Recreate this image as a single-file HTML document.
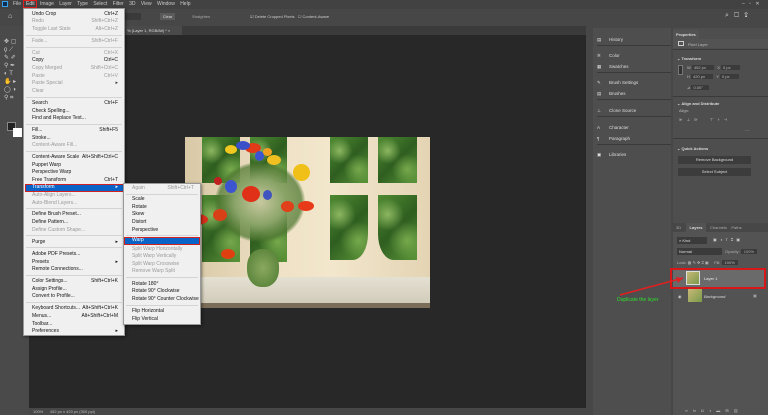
<!DOCTYPE html><html><head><style>
*{margin:0;padding:0;box-sizing:border-box}
body{width:768px;height:415px;overflow:hidden;background:#535353;font-family:"Liberation Sans",sans-serif;position:relative;font-size:5px;color:#ddd}
.a{position:absolute}
.menu{background:#f0f0f0;border:1px solid #999;color:#111;box-shadow:1px 1px 3px rgba(0,0,0,.5)}
.mi{position:absolute;left:8px;right:4px;height:7px;line-height:7px;font-size:5px;white-space:nowrap}
.mi span{position:absolute;right:2px}
.d{color:#9a9a9a}
.sep{position:absolute;left:2px;right:2px;height:1px;background:#d4d4d4}
.pl{position:absolute;left:8px;font-size:4.5px;color:#ddd}
.f{position:absolute;border-radius:50%}
.pane{position:absolute;background:radial-gradient(circle at 25% 30%,rgba(160,200,110,.8) 0,transparent 30%),radial-gradient(circle at 75% 70%,rgba(140,190,90,.7) 0,transparent 35%),linear-gradient(135deg,#4e8a32,#2f5e20 50%,#5a9438)}
</style></head><body>
<div class="a" style="left:0;top:0;width:768px;height:9px;background:#424242"></div>
<div class="a" style="left:2px;top:1px;width:6px;height:6px;background:#0f2f50;border:1px solid #3aa0f0"></div>
<div class="a" style="left:13px;top:1px;font-size:5px;color:#ccc">File</div>
<div class="a" style="left:23px;top:0;width:14px;height:8px;border:1px solid #e02020"></div>
<div class="a" style="left:26px;top:1px;font-size:5px;color:#ddd">Edit</div>
<div class="a" style="left:40px;top:1px;font-size:5px;color:#ccc;word-spacing:4px">Image Layer Type Select Filter 3D View Window Help</div>
<div class="a" style="left:742px;top:1px;font-size:5px;color:#ccc;word-spacing:3px">– ▫ ✕</div>
<div class="a" style="left:0;top:9px;width:768px;height:17px;background:#474747"></div>
<div class="a" style="left:8px;top:13px;font-size:7px;color:#ddd">⌂</div>
<div class="a" style="left:105px;top:13px;width:36px;height:7px;background:#3a3a3a"></div>
<div class="a" style="left:160px;top:13px;width:15px;height:7px;background:#5a5a5a;font-size:4px;line-height:7px;text-align:center">Clear</div>
<div class="a" style="left:192px;top:14px;font-size:4px;color:#aaa">Straighten</div>
<div class="a" style="left:250px;top:14px;font-size:4px;color:#ccc">☑ Delete Cropped Pixels &nbsp; ☐ Content-Aware</div>
<div class="a" style="left:725px;top:12px;font-size:7px;color:#ccc;word-spacing:3px">⌕ ▢ ⇪</div>
<div class="a" style="left:29px;top:26px;width:557px;height:9px;background:#3b3b3b"></div>
<div class="a" style="left:125px;top:26px;width:57px;height:9px;background:#4a4a4a;font-size:4px;line-height:9px;padding-left:2px">% (Layer 1, RGB/8#) * ×</div>
<div class="a" style="left:29px;top:35px;width:557px;height:373px;background:#282828"></div>
<div class="a" style="left:29px;top:408px;width:557px;height:7px;background:#474747;font-size:4px;color:#bbb;padding-left:4px;line-height:7px">100% &nbsp;&nbsp;&nbsp;&nbsp; 452 px x 420 px (300 ppi)</div>
<div class="a" style="left:0;top:26px;width:29px;height:389px;background:#4a4a4a"></div>
<div class="a" style="left:4px;top:38px;font-size:6px;color:#ccc;line-height:8px;width:22px">✥ ▢<br>ϙ ⟋<br>✎ ✐<br>⚲ ✒<br>◐ T<br>✋ ▸<br>◯ ◑<br>⚲ ⌗</div>
<div class="a" style="left:7px;top:122px;width:9px;height:9px;background:#222;border:1px solid #888"></div>
<div class="a" style="left:13px;top:128px;width:9px;height:9px;background:#fff"></div>
<div class="a" style="left:185px;top:137px;width:245px;height:171px;background:linear-gradient(90deg,#d8c8a6,#efe2c6 40%,#f2e6cc 60%,#e4d4b4);overflow:hidden">
 <div class="pane" style="left:17px;top:0;width:38px;height:46px"></div>
 <div class="pane" style="left:65px;top:0;width:37px;height:46px"></div>
 <div class="pane" style="left:17px;top:58px;width:38px;height:67px"></div>
 <div class="pane" style="left:65px;top:58px;width:37px;height:67px"></div>
 <div class="pane" style="left:145px;top:0;width:38px;height:46px"></div>
 <div class="pane" style="left:193px;top:0;width:39px;height:46px"></div>
 <div class="pane" style="left:145px;top:58px;width:38px;height:65px;border-radius:0 0 40% 0"></div>
 <div class="pane" style="left:193px;top:58px;width:39px;height:65px;border-radius:0 0 0 40%"></div>
 <div class="a" style="left:0;top:140px;width:245px;height:26px;background:linear-gradient(#e4e0d2,#d2ccba)"></div>
 <div class="a" style="left:0;top:166px;width:245px;height:5px;background:#7a6e58"></div>
 <div class="a" style="left:62px;top:112px;width:32px;height:38px;border-radius:45%;background:radial-gradient(#8aa860,#4e7a30)"></div>
 <div class="f" style="left:30px;top:25px;width:90px;height:80px;background:radial-gradient(#c8c8a0 0,#8aa468 40%,rgba(80,120,50,.75) 65%,transparent 72%)"></div>
 <div class="f" style="left:60px;top:6px;width:16px;height:10px;background:#e03a18"></div>
 <div class="f" style="left:40px;top:8px;width:12px;height:9px;background:#f0c820"></div>
 <div class="f" style="left:51px;top:4px;width:14px;height:9px;background:#3a50c8"></div>
 <div class="f" style="left:70px;top:14px;width:9px;height:10px;background:#3c54d0"></div>
 <div class="f" style="left:82px;top:18px;width:14px;height:10px;background:#f0c020"></div>
 <div class="f" style="left:78px;top:11px;width:9px;height:8px;background:#f0a020"></div>
 <div class="f" style="left:108px;top:27px;width:17px;height:17px;background:#f0c018"></div>
 <div class="f" style="left:40px;top:43px;width:12px;height:13px;background:#3c54d0"></div>
 <div class="f" style="left:29px;top:40px;width:8px;height:8px;background:#c02020"></div>
 <div class="f" style="left:57px;top:49px;width:18px;height:16px;background:#e03018"></div>
 <div class="f" style="left:78px;top:53px;width:9px;height:10px;background:#4054c0"></div>
 <div class="f" style="left:113px;top:64px;width:16px;height:10px;background:#e83a18"></div>
 <div class="f" style="left:96px;top:64px;width:13px;height:11px;background:#e0401a"></div>
 <div class="f" style="left:0px;top:77px;width:23px;height:11px;background:#d8301a"></div>
 <div class="f" style="left:28px;top:72px;width:14px;height:12px;background:#d84018"></div>
 <div class="f" style="left:36px;top:112px;width:14px;height:10px;background:#e04010"></div>
</div>
<div class="a menu" style="left:23px;top:8px;width:102px;height:328px">
<div class="mi" style="top:2px">Undo Crop<span>Ctrl+Z</span></div>
<div class="mi d" style="top:9px">Redo<span>Shift+Ctrl+Z</span></div>
<div class="mi d" style="top:17px">Toggle Last State<span>Alt+Ctrl+Z</span></div>
<div class="sep" style="top:26px"></div>
<div class="mi d" style="top:29px">Fade...<span>Shift+Ctrl+F</span></div>
<div class="sep" style="top:38px"></div>
<div class="mi d" style="top:41px">Cut<span>Ctrl+X</span></div>
<div class="mi" style="top:48px">Copy<span>Ctrl+C</span></div>
<div class="mi d" style="top:56px">Copy Merged<span>Shift+Ctrl+C</span></div>
<div class="mi d" style="top:64px">Paste<span>Ctrl+V</span></div>
<div class="mi d" style="top:71px">Paste Special<span style="color:#333">▸</span></div>
<div class="mi d" style="top:79px">Clear</div>
<div class="sep" style="top:88px"></div>
<div class="mi" style="top:91px">Search<span>Ctrl+F</span></div>
<div class="mi" style="top:99px">Check Spelling...</div>
<div class="mi" style="top:106px">Find and Replace Text...</div>
<div class="sep" style="top:115px"></div>
<div class="mi" style="top:118px">Fill...<span>Shift+F5</span></div>
<div class="mi" style="top:126px">Stroke...</div>
<div class="mi d" style="top:133px">Content-Aware Fill...</div>
<div class="sep" style="top:142px"></div>
<div class="mi" style="top:145px">Content-Aware Scale<span>Alt+Shift+Ctrl+C</span></div>
<div class="mi" style="top:153px">Puppet Warp</div>
<div class="mi" style="top:160px">Perspective Warp</div>
<div class="mi" style="top:168px">Free Transform<span>Ctrl+T</span></div>
<div class="a" style="left:1px;top:175px;width:99px;height:8px;background:#0a64c8;border:1px solid #d02020"></div>
<div class="mi" style="top:175px;color:#fff">Transform<span>▸</span></div>
<div class="mi d" style="top:183px">Auto-Align Layers...</div>
<div class="mi d" style="top:191px">Auto-Blend Layers...</div>
<div class="sep" style="top:199px"></div>
<div class="mi" style="top:202px">Define Brush Preset...</div>
<div class="mi" style="top:210px">Define Pattern...</div>
<div class="mi d" style="top:218px">Define Custom Shape...</div>
<div class="sep" style="top:226px"></div>
<div class="mi" style="top:230px">Purge<span>▸</span></div>
<div class="sep" style="top:238px"></div>
<div class="mi" style="top:242px">Adobe PDF Presets...</div>
<div class="mi" style="top:250px">Presets<span>▸</span></div>
<div class="mi" style="top:257px">Remote Connections...</div>
<div class="sep" style="top:266px"></div>
<div class="mi" style="top:269px">Color Settings...<span>Shift+Ctrl+K</span></div>
<div class="mi" style="top:277px">Assign Profile...</div>
<div class="mi" style="top:284px">Convert to Profile...</div>
<div class="sep" style="top:293px"></div>
<div class="mi" style="top:296px">Keyboard Shortcuts...<span>Alt+Shift+Ctrl+K</span></div>
<div class="mi" style="top:304px">Menus...<span>Alt+Shift+Ctrl+M</span></div>
<div class="mi" style="top:312px">Toolbar...</div>
<div class="mi" style="top:319px">Preferences<span>▸</span></div>
</div>
<div class="a menu" style="left:123px;top:183px;width:78px;height:142px">
<div class="mi d" style="top:1px">Again<span>Shift+Ctrl+T</span></div>
<div class="sep" style="top:10px"></div>
<div class="mi" style="top:12px">Scale</div>
<div class="mi" style="top:20px">Rotate</div>
<div class="mi" style="top:27px">Skew</div>
<div class="mi" style="top:35px">Distort</div>
<div class="mi" style="top:43px">Perspective</div>
<div class="sep" style="top:51px"></div>
<div class="a" style="left:0;top:53px;width:76px;height:8px;background:#0a64c8;border:1px solid #d02020"></div>
<div class="mi" style="top:53px;color:#fff">Warp</div>
<div class="mi d" style="top:62px">Split Warp Horizontally</div>
<div class="mi d" style="top:69px">Split Warp Vertically</div>
<div class="mi d" style="top:77px">Split Warp Crosswise</div>
<div class="mi d" style="top:84px">Remove Warp Split</div>
<div class="sep" style="top:93px"></div>
<div class="mi" style="top:97px">Rotate 180°</div>
<div class="mi" style="top:104px">Rotate 90° Clockwise</div>
<div class="mi" style="top:112px">Rotate 90° Counter Clockwise</div>
<div class="sep" style="top:121px"></div>
<div class="mi" style="top:124px">Flip Horizontal</div>
<div class="mi" style="top:132px">Flip Vertical</div>
</div>
<div class="a" style="left:586px;top:26px;width:182px;height:389px;background:#474747"></div>
<div class="a" style="left:593px;top:28px;width:78px;height:387px;background:#4e4e4e"></div>
<div class="a" style="left:673px;top:28px;width:95px;height:387px;background:#4e4e4e"></div>
<div class="a" style="left:593px;top:28px;width:78px;height:200px;font-size:4px;color:#ddd">
 <div class="pl" style="left:16px;top:9px">History</div>
 <div class="a" style="left:4px;top:17px;width:74px;height:1px;background:#3a3a3a"></div>
 <div class="pl" style="left:16px;top:25px">Color</div>
 <div class="pl" style="left:16px;top:36px">Swatches</div>
 <div class="a" style="left:4px;top:44px;width:74px;height:1px;background:#3a3a3a"></div>
 <div class="pl" style="left:16px;top:52px">Brush Settings</div>
 <div class="pl" style="left:16px;top:63px">Brushes</div>
 <div class="a" style="left:4px;top:71px;width:74px;height:1px;background:#3a3a3a"></div>
 <div class="pl" style="left:16px;top:80px">Clone Source</div>
 <div class="a" style="left:4px;top:88px;width:74px;height:1px;background:#3a3a3a"></div>
 <div class="pl" style="left:16px;top:97px">Character</div>
 <div class="pl" style="left:16px;top:108px">Paragraph</div>
 <div class="a" style="left:4px;top:116px;width:74px;height:1px;background:#3a3a3a"></div>
 <div class="pl" style="left:16px;top:124px">Libraries</div>
 <div class="pl" style="left:4px;top:9px">▤</div><div class="pl" style="left:4px;top:25px">✲</div><div class="pl" style="left:4px;top:36px">▦</div><div class="pl" style="left:4px;top:52px">✎</div><div class="pl" style="left:4px;top:63px">▤</div><div class="pl" style="left:4px;top:80px">⊥</div><div class="pl" style="left:4px;top:97px">A</div><div class="pl" style="left:4px;top:108px">¶</div><div class="pl" style="left:4px;top:124px">▣</div>
</div>
<div class="a" style="left:673px;top:28px;width:95px;height:195px;font-size:4px">
 <div class="a" style="left:0;top:2px;width:26px;height:9px;background:#535353;line-height:9px;padding-left:3px;font-weight:bold">Properties</div>
 <div class="a" style="left:0;top:11px;width:95px;height:9px;background:#535353"></div>
 <div class="a" style="left:5px;top:13px;width:6px;height:5px;border:1px solid #ccc"></div>
 <div class="a" style="left:15px;top:14px;color:#bbb">Pixel Layer</div>
 <div class="a" style="left:0;top:21px;width:95px;height:1px;background:#3a3a3a"></div>
 <div class="a" style="left:4px;top:28px;font-weight:bold">⌄ Transform</div>
 <div class="a" style="left:5px;top:37px;width:5px;height:10px;background:#333;border:1px solid #777"></div>
 <div class="a" style="left:14px;top:37px;color:#bbb">W <span style="background:#3b3b3b;padding:0 8px 0 2px">452 px</span> &nbsp; X <span style="background:#3b3b3b;padding:0 9px 0 2px">0 px</span></div>
 <div class="a" style="left:14px;top:46px;color:#bbb">H <span style="background:#3b3b3b;padding:0 8px 0 2px">420 px</span> &nbsp; Y <span style="background:#3b3b3b;padding:0 9px 0 2px">0 px</span></div>
 <div class="a" style="left:14px;top:57px;color:#bbb">⊿ <span style="background:#3b3b3b;padding:0 6px 0 2px">0.00°</span></div>
 <div class="a" style="left:0;top:68px;width:95px;height:1px;background:#3a3a3a"></div>
 <div class="a" style="left:4px;top:73px;font-weight:bold">⌄ Align and Distribute</div>
 <div class="a" style="left:6px;top:80px;color:#bbb">Align:</div>
 <div class="a" style="left:6px;top:89px;color:#ccc;word-spacing:3px">⊫ ⊥ ⊪ &nbsp; ⊤ ⊦ ⊣</div>
 <div class="a" style="left:72px;top:100px;color:#ccc">···</div>
 <div class="a" style="left:0;top:110px;width:95px;height:1px;background:#3a3a3a"></div>
 <div class="a" style="left:4px;top:118px;font-weight:bold">⌄ Quick Actions</div>
 <div class="a" style="left:5px;top:128px;width:73px;height:8px;background:#3c3c3c;text-align:center;line-height:8px">Remove Background</div>
 <div class="a" style="left:5px;top:140px;width:73px;height:8px;background:#3c3c3c;text-align:center;line-height:8px">Select Subject</div>
</div>
<div class="a" style="left:673px;top:223px;width:95px;height:192px;font-size:4px">
 <div class="a" style="left:0;top:0;width:95px;height:9px;background:#474747"></div>
 <div class="a" style="left:3px;top:2px;color:#aaa">3D</div>
 <div class="a" style="left:13px;top:0;width:20px;height:9px;background:#535353;line-height:9px;text-align:center;font-weight:bold">Layers</div>
 <div class="a" style="left:37px;top:2px;color:#aaa">Channels &nbsp;&nbsp; Paths</div>
 <div class="a" style="left:0;top:9px;width:95px;height:183px;background:#535353"></div>
 <div class="a" style="left:4px;top:14px;width:30px;height:7px;background:#3b3b3b;line-height:7px;padding-left:2px">⌕ Kind</div>
 <div class="a" style="left:40px;top:14px;color:#ccc;word-spacing:2px">▣ ◑ T ⌗ ▣</div>
 <div class="a" style="left:4px;top:25px;width:45px;height:7px;background:#3b3b3b;line-height:7px;padding-left:2px">Normal</div>
 <div class="a" style="left:52px;top:26px;color:#aaa">Opacity: <span style="background:#3b3b3b;padding:0 3px">100%</span></div>
 <div class="a" style="left:4px;top:37px;color:#bbb">Lock: ▦ ✎ ✥ ⌗ ▣ &nbsp;&nbsp;&nbsp; Fill: <span style="background:#3b3b3b;padding:0 3px">100%</span></div>
 <div class="a" style="left:0;top:47px;width:91px;height:17px;background:#6a6a6a"></div>
 <div class="a" style="left:-3px;top:45px;width:96px;height:21px;border:2px solid #d81818"></div>
 <div class="a" style="left:5px;top:53px;color:#ccc">◉</div>
 <div class="a" style="left:13px;top:48px;width:14px;height:14px;background:linear-gradient(135deg,#c8b878,#7a9a4a);border:1px solid #ddd"></div>
 <div class="a" style="left:31px;top:53px;color:#eee">Layer 1</div>
 <div class="a" style="left:5px;top:71px;color:#ccc">◉</div>
 <div class="a" style="left:15px;top:66px;width:14px;height:13px;background:linear-gradient(135deg,#c8b878,#7a9a4a)"></div>
 <div class="a" style="left:31px;top:71px;color:#ddd;font-style:italic">Background</div>
 <div class="a" style="left:80px;top:70px;color:#aaa">▣</div>
 <div class="a" style="left:12px;top:185px;color:#bbb;word-spacing:4px">∞ fx ◘ ◑ ▬ ⊞ ▥</div>
</div>
<svg class="a" style="left:600px;top:270px" width="90" height="40"><line x1="20" y1="25" x2="83" y2="8" stroke="#e02020" stroke-width="1.5"/><polygon points="83,8 76,7 78,13" fill="#e02020"/></svg>
<div class="a" style="left:617px;top:297px;font-size:5px;color:#2ee02e">Duplicate the layer</div>
</body></html>
